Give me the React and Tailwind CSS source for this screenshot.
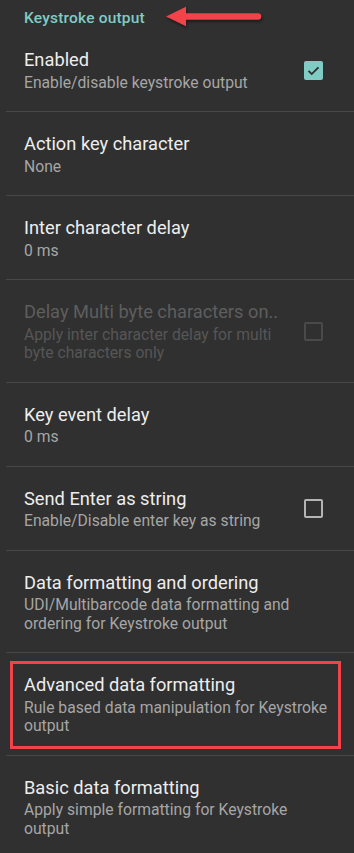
import React from "react"

const rows = [
  { title: "Action key character", summary: "None" },
  { title: "Inter character delay", summary: "0 ms" },
  {
    title: "Delay Multi byte characters on..",
    summary: "Apply inter character delay for multi byte characters only",
    checkbox: false,
    disabled: true,
  },
  { title: "Key event delay", summary: "0 ms" },
  { title: "Send Enter as string", summary: "Enable/Disable enter key as string", checkbox: false },
  {
    title: "Data formatting and ordering",
    summary: "UDI/Multibarcode data formatting and ordering for Keystroke output",
  },
  {
    title: "Advanced data formatting",
    summary: "Rule based data manipulation for Keystroke output",
    highlight: true,
  },
  { title: "Basic data formatting", summary: "Apply simple formatting for Keystroke output" },
]

function Checkbox({ checked, disabled }) {
  if (checked) {
    return (
      <div className="flex h-[19px] w-[19px] items-center justify-center rounded-[2px] bg-[#80cbc4]">
        <svg viewBox="0 0 24 24" className="h-[17px] w-[17px]" fill="none">
          <path d="M5 12.5l4.5 4.5L19 7.5" stroke="#2b2f2f" strokeWidth="2.6" />
        </svg>
      </div>
    )
  }
  return (
    <div
      className={`h-[19px] w-[19px] rounded-[2px] border-2 ${
        disabled ? "border-[#4a4a4a]" : "border-[#b4b4b4]"
      }`}
    />
  )
}

function PrefRow({ title, summary, checkbox, checked, disabled, highlight }) {
  return (
    <div className="relative flex items-center pb-[19px] pl-6 pt-5">
      <div className={`min-w-0 flex-1 ${checkbox === undefined ? "pr-[22px]" : ""}`}>
        <div
          className={`whitespace-nowrap text-[18.25px] leading-[24px] ${
            disabled ? "text-[#5e5e5e]" : "text-[#ededed]"
          }`}
        >
          {title}
        </div>
        <div
          className={`mt-[1.5px] text-[15.7px] leading-[18.5px] ${
            disabled ? "text-[#565656]" : "text-[#a6a6a6]"
          }`}
        >
          {summary}
        </div>
      </div>
      {checkbox !== undefined && (
        <div className="shrink-0 pl-4 pr-[31px]">
          <Checkbox checked={checked} disabled={disabled} />
        </div>
      )}
      {highlight && (
        <div className="pointer-events-none absolute bottom-[6px] left-[10px] right-[13px] top-[8px] border-[3px] border-[#f2434b]" />
      )}
    </div>
  )
}

function Divider() {
  return <div className="ml-[6px] h-px bg-[#474747]" />
}

export default function App() {
  return (
    <div
      className="min-h-[853px] w-full overflow-hidden bg-[#303030]"
      style={{ fontFamily: "Roboto, 'Noto Sans', sans-serif" }}
    >
      <div className="relative pl-6 pt-2">
        <div className="text-[15.5px] font-medium leading-[20px] tracking-[0.2px] text-[#80cbc4]">
          Keystroke output
        </div>
        {/* red annotation arrow */}
        <svg
          className="absolute left-[164px] top-[2px]"
          width="104"
          height="32"
          viewBox="0 0 104 32"
          style={{ filter: "drop-shadow(1px 2px 1.5px rgba(0,0,0,0.45))" }}
        >
          <polygon points="2,14.5 22,4.8 22,24.2" fill="#f2434b" />
          <line x1="20" y1="14.5" x2="94" y2="14.5" stroke="#f2434b" strokeWidth="6.5" strokeLinecap="round" />
        </svg>
      </div>

      <PrefRow title="Enabled" summary="Enable/disable keystroke output" checkbox checked />
      {rows.map((r) => (
        <React.Fragment key={r.title}>
          <Divider />
          <PrefRow {...r} />
        </React.Fragment>
      ))}
    </div>
  )
}
